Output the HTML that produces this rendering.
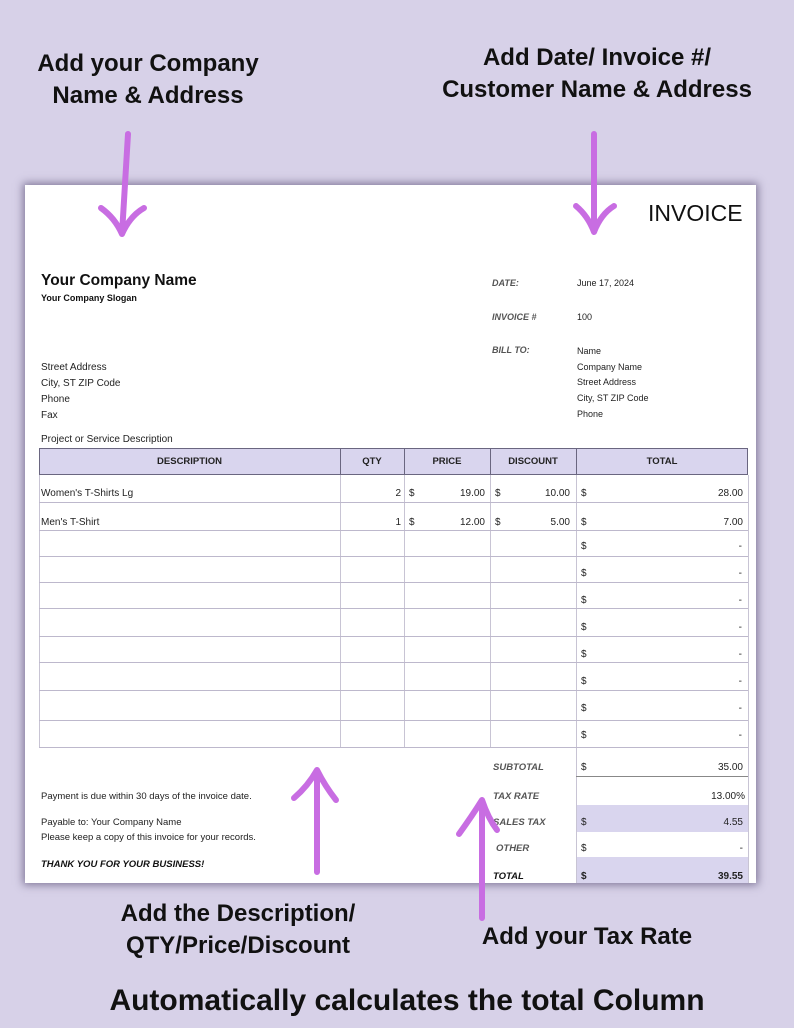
<!DOCTYPE html>
<html><head><meta charset="utf-8"><style>
*{margin:0;padding:0;box-sizing:border-box}
body{width:794px;height:1028px;background:#d7d1e8;position:relative;overflow:hidden;font-family:"Liberation Sans",sans-serif}
.h{position:absolute;font-family:"Liberation Sans Narrow","Liberation Sans",sans-serif;font-weight:bold;color:#111;text-align:center;font-size:24px;line-height:32px}
.paper{position:absolute;left:25px;top:185px;width:731px;height:698px;background:#fff;box-shadow:0 0 8px 2px rgba(60,50,90,.55)}
.t{position:absolute;font-size:10px;line-height:12px;color:#222;white-space:nowrap}
.r{text-align:right}
.i{font-style:italic;font-weight:bold;color:#555}
.hl{position:absolute;background:#bdb8cc;height:1px}
.vl{position:absolute;background:#c8c4d4;width:1px}
</style></head><body>
<div class="h" style="left:0;width:296px;top:48px">Add your Company<br>Name &amp; Address</div>
<div class="h" style="left:430px;width:334px;top:42px">Add Date/ Invoice #/<br>Customer Name &amp; Address</div>
<div class="h" style="left:90px;width:296px;top:898px">Add the Description/<br>QTY/Price/Discount</div>
<div class="h" style="left:460px;width:254px;top:921px">Add your Tax Rate</div>
<div class="h" style="left:0;width:814px;top:982px;font-size:30px;line-height:38px">Automatically calculates the total Column</div>

<div class="paper"></div>
<div class="t" style="left:648px;top:200px;font-size:23px;line-height:26px;color:#111">INVOICE</div>
<div class="t" style="left:41px;top:272px;font-size:15.5px;line-height:18px;font-weight:bold;color:#111">Your Company Name</div>
<div class="t" style="left:41px;top:292px;font-size:9px;font-weight:bold;color:#111">Your Company Slogan</div>
<div class="t" style="left:41px;top:360px;line-height:16px">Street Address<br>City, ST ZIP Code<br>Phone<br>Fax</div>
<div class="t" style="left:41px;top:434px">Project or Service Description</div>
<div class="t i" style="left:492px;top:277px;font-size:9px">DATE:</div>
<div class="t" style="left:577px;top:277px;font-size:9px">June 17, 2024</div>
<div class="t i" style="left:492px;top:311px;font-size:9px">INVOICE #</div>
<div class="t" style="left:577px;top:311px;font-size:9px">100</div>
<div class="t i" style="left:492px;top:344px;font-size:9px">BILL TO:</div>
<div class="t" style="left:577px;top:344px;font-size:9px;line-height:15.7px">Name<br>Company Name<br>Street Address<br>City, ST ZIP Code<br>Phone</div>

<div style="position:absolute;left:39px;top:448px;width:709px;height:27px;background:#d9d5ee;border:1.5px solid #6a6680"></div>
<div class="t" style="left:39px;width:301px;top:456px;text-align:center;font-weight:bold;font-size:9.5px">DESCRIPTION</div>
<div class="t" style="left:340px;width:64px;top:456px;text-align:center;font-weight:bold;font-size:9.5px">QTY</div>
<div class="t" style="left:404px;width:86px;top:456px;text-align:center;font-weight:bold;font-size:9.5px">PRICE</div>
<div class="t" style="left:490px;width:86px;top:456px;text-align:center;font-weight:bold;font-size:9.5px">DISCOUNT</div>
<div class="t" style="left:576px;width:172px;top:456px;text-align:center;font-weight:bold;font-size:9.5px">TOTAL</div>
<div class="vl" style="left:340px;top:449px;height:26px;background:#6a6680"></div>
<div class="vl" style="left:404px;top:449px;height:26px;background:#6a6680"></div>
<div class="vl" style="left:490px;top:449px;height:26px;background:#6a6680"></div>
<div class="vl" style="left:576px;top:449px;height:26px;background:#6a6680"></div>
<div class="vl" style="left:340px;top:475px;height:272px"></div>
<div class="vl" style="left:404px;top:475px;height:272px"></div>
<div class="vl" style="left:490px;top:475px;height:272px"></div>
<div class="vl" style="left:576px;top:475px;height:408px"></div>
<div class="vl" style="left:748px;top:475px;height:408px"></div>
<div class="vl" style="left:39px;top:475px;height:272px"></div>
<div class="hl" style="left:39px;width:709px;top:502px"></div>
<div class="hl" style="left:39px;width:709px;top:530px"></div>
<div class="hl" style="left:39px;width:709px;top:556px"></div>
<div class="hl" style="left:39px;width:709px;top:582px"></div>
<div class="hl" style="left:39px;width:709px;top:608px"></div>
<div class="hl" style="left:39px;width:709px;top:636px"></div>
<div class="hl" style="left:39px;width:709px;top:662px"></div>
<div class="hl" style="left:39px;width:709px;top:690px"></div>
<div class="hl" style="left:39px;width:709px;top:720px"></div>
<div class="hl" style="left:39px;width:709px;top:747px"></div>
<div class="hl" style="left:576px;width:172px;top:776px;background:#888"></div>
<div style="position:absolute;left:577px;top:805px;width:171px;height:27px;background:#d9d5ee"></div>
<div style="position:absolute;left:577px;top:857px;width:171px;height:26px;background:#d9d5ee"></div>

<div class="t" style="left:41px;top:488px">Women's T-Shirts Lg</div>
<div class="t r" style="left:340px;width:61px;top:488px">2</div>
<div class="t" style="left:409px;top:488px">$</div><div class="t r" style="left:404px;width:81px;top:488px">19.00</div>
<div class="t" style="left:495px;top:488px">$</div><div class="t r" style="left:490px;width:80px;top:488px">10.00</div>
<div class="t" style="left:581px;top:488px">$</div><div class="t r" style="left:576px;width:167px;top:488px">28.00</div>
<div class="t" style="left:41px;top:517px">Men's T-Shirt</div>
<div class="t r" style="left:340px;width:61px;top:517px">1</div>
<div class="t" style="left:409px;top:517px">$</div><div class="t r" style="left:404px;width:81px;top:517px">12.00</div>
<div class="t" style="left:495px;top:517px">$</div><div class="t r" style="left:490px;width:80px;top:517px">5.00</div>
<div class="t" style="left:581px;top:517px">$</div><div class="t r" style="left:576px;width:167px;top:517px">7.00</div>

<div class="t" style="left:581px;top:533px;line-height:27px">$<br>$<br>$<br>$<br>$<br>$<br>$<br>$</div>
<div class="t r" style="left:576px;width:166px;top:533px;line-height:27px">-<br>-<br>-<br>-<br>-<br>-<br>-<br>-</div>

<div class="t i" style="left:493px;top:762px;font-size:9.5px">SUBTOTAL</div>
<div class="t" style="left:581px;top:762px">$</div><div class="t r" style="left:576px;width:167px;top:762px">35.00</div>
<div class="t i" style="left:493px;top:791px;font-size:9.5px">TAX RATE</div>
<div class="t r" style="left:576px;width:169px;top:791px">13.00%</div>
<div class="t i" style="left:493px;top:817px;font-size:9.5px">SALES TAX</div>
<div class="t" style="left:581px;top:817px">$</div><div class="t r" style="left:576px;width:167px;top:817px">4.55</div>
<div class="t i" style="left:496px;top:843px;font-size:9.5px">OTHER</div>
<div class="t" style="left:581px;top:843px">$</div><div class="t r" style="left:576px;width:167px;top:843px">-</div>
<div class="t i" style="left:493px;top:871px;font-size:9.5px;color:#111">TOTAL</div>
<div class="t" style="left:581px;top:871px;font-weight:bold">$</div><div class="t r" style="left:576px;width:167px;top:871px;font-weight:bold">39.55</div>

<div class="t" style="left:41px;top:791px;font-size:9.5px">Payment is due within 30 days of the invoice date.</div>
<div class="t" style="left:41px;top:817px;font-size:9.5px">Payable to: Your Company Name</div>
<div class="t" style="left:41px;top:832px;font-size:9.5px">Please keep a copy of this invoice for your records.</div>
<div class="t" style="left:41px;top:859px;font-size:9.5px;font-weight:bold;font-style:italic;color:#111">THANK YOU FOR YOUR BUSINESS!</div>

<svg style="position:absolute;left:0;top:0" width="794" height="1028" fill="none" stroke="#c86de2" stroke-width="6" stroke-linecap="round" stroke-linejoin="round">
<path d="M128 134 L122 234 M101 208 Q115 218 122 234 Q130 216 144 208"/>
<path d="M594 134 L594 232 M576 206 Q588 216 594 232 Q601 214 614 206"/>
<path d="M317 770 L317 872 M294 798 Q308 786 317 770 Q325 786 336 800"/>
<path d="M482 800 L482 918 M459 834 Q472 816 482 800 Q488 818 497 830"/>
</svg>
</body></html>
